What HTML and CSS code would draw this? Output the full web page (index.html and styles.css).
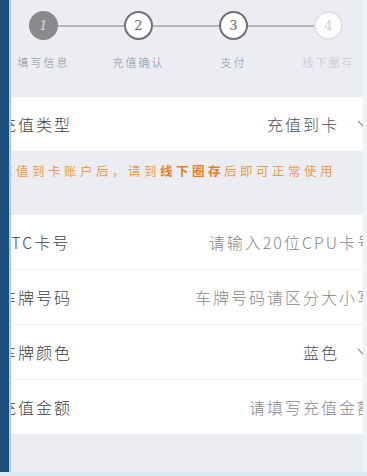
FILE: index.html
```html
<!DOCTYPE html>
<html lang="zh-CN">
<head>
    <meta charset="UTF-8">
    <meta name="viewport" content="width=device-width, initial-scale=1.0">
    <title>充值</title>
    <link rel="stylesheet" href="styles.css">
</head>
<body>

<div class="frame">
    <div class="edge-left"></div>

    <div class="screen">
        <div class="page">
            <!-- steps -->
            <div class="steps">
                <div class="step done">
                    <div class="step-top"><span class="line hidden"></span><span class="dot">1</span><span class="line"></span></div>
                    <div class="step-name">填写信息</div>
                </div>
                <div class="step">
                    <div class="step-top"><span class="line"></span><span class="dot">2</span><span class="line"></span></div>
                    <div class="step-name">充值确认</div>
                </div>
                <div class="step">
                    <div class="step-top"><span class="line"></span><span class="dot">3</span><span class="line"></span></div>
                    <div class="step-name">支付</div>
                </div>
                <div class="step off">
                    <div class="step-top"><span class="line"></span><span class="dot">4</span><span class="line hidden"></span></div>
                    <div class="step-name">线下圈存</div>
                </div>
            </div>

            <div class="group">
                <div class="row">
                    <span class="label">充值类型</span>
                    <span class="value">充值到卡</span>
                    <svg class="chevron" width="14" height="8" viewBox="0 0 14 8"><path d="M1 1 L7 7 L13 1" fill="none" stroke="#999" stroke-width="1.3"/></svg>
                </div>
            </div>

            <p class="notice">充值到卡账户后，请到<b>线下圈存</b>后即可正常使用</p>

            <div class="group">
                <div class="row">
                    <span class="label">ETC卡号</span>
                    <span class="hint">请输入20位CPU卡号</span>
                </div>
                <div class="row">
                    <span class="label">车牌号码</span>
                    <span class="hint">车牌号码请区分大小写</span>
                </div>
                <div class="row">
                    <span class="label">车牌颜色</span>
                    <span class="value">蓝色</span>
                    <svg class="chevron" width="14" height="8" viewBox="0 0 14 8"><path d="M1 1 L7 7 L13 1" fill="none" stroke="#999" stroke-width="1.3"/></svg>
                </div>
                <div class="row">
                    <span class="label">充值金额</span>
                    <span class="hint">请填写充值金额</span>
                </div>
            </div>
        </div>
    </div>

    <div class="edge-right"></div>
</div>
<div class="edge-bottom"></div>

</body>
</html>
```

FILE: styles.css
```css
html, body {
    margin: 0;
    padding: 0;
    height: 100%;
}

body {
    font-family: "Noto Sans CJK SC", "Noto Sans", sans-serif;
    background-color: #ecedf2;
    overflow: hidden;
}

.frame {
    display: flex;
    height: 472px;
}

.edge-left {
    width: 9px;
    flex-shrink: 0;
    background-color: #1c4f7e;
    border-right: 2px solid #a9cbe6;
}

.edge-right {
    width: 4px;
    flex-shrink: 0;
    background-color: #eef4f8;
}

.edge-bottom {
    height: 4px;
    background-color: #d8ebf7;
}

.screen {
    flex: 1;
    overflow: hidden;
    background-color: #ecedf2;
}

.page {
    margin-left: -11px;
    width: 390px;
}

/* steps */
.steps {
    display: flex;
    margin-left: -4px;
    padding-top: 11px;
    height: 86px;
}

.step {
    width: 95px;
    display: flex;
    flex-direction: column;
    align-items: center;
}

.step-top {
    display: flex;
    align-items: center;
    width: 100%;
}

.line {
    flex: 1;
    height: 2px;
    background-color: #b5b5b8;
}

.line.hidden {
    visibility: hidden;
}

.dot {
    width: 25px;
    height: 25px;
    border-radius: 50%;
    border: 2px solid #707070;
    background-color: #fff;
    color: #666;
    font-size: 13px;
    line-height: 25px;
    text-align: center;
    font-family: "DejaVu Serif", serif;
}

.step.done .dot {
    background-color: #8a8a8c;
    border-color: #8a8a8c;
    color: #d8d8d8;
    font-style: italic;
}

.step.off .dot {
    border-color: #e2e2e4;
    color: #cfcfcf;
}

.step-name {
    margin-top: 14px;
    font-size: 11px;
    font-weight: 300;
    letter-spacing: 2px;
    color: #8d8d90;
    white-space: nowrap;
}

.step.off .step-name {
    color: #c4c4c8;
}

/* form rows */
.group {
    background-color: #fff;
}

.row {
    display: flex;
    align-items: center;
    height: 54px;
    padding-right: 15px;
    border-bottom: 1px solid #f1f1f3;
    font-size: 16px;
    font-weight: 300;
    letter-spacing: 2px;
}

.row:last-child {
    border-bottom: none;
}

.label {
    color: #3f3f42;
    flex: 1;
}

.value {
    color: #505053;
}

.hint {
    color: #88888b;
}

.chevron {
    margin-left: 18px;
    margin-right: 4px;
}

.notice {
    margin: 0;
    height: 64px;
    padding-top: 10px;
    box-sizing: border-box;
    font-size: 12.5px;
    letter-spacing: 3.5px;
    color: #eb9d45;
}

.notice b {
    color: #e57f1c;
}
```
